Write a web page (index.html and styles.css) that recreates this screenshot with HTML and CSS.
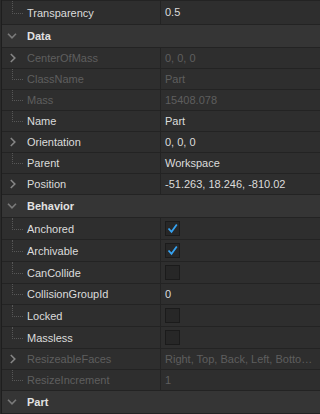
FILE: index.html
```html
<!DOCTYPE html>
<html>
<head>
<meta charset="utf-8">
<link rel="stylesheet" href="styles.css">
</head>
<body>
<div class="panel">
  <div class="list">
    <div class="row top leaf"><div class="name">Transparency</div><div class="val">0.5</div></div>
    <div class="hdr"><svg class="chev-down" viewBox="0 0 10 6" width="10" height="6"><polyline points="1,0.8 5,4.8 9,0.8" fill="none" stroke="#7a7a7a" stroke-width="1.6"/></svg><span class="htext">Data</span></div>
    <div class="row dis"><div class="name"><svg class="chev-right" viewBox="0 0 6 10" width="6" height="10"><polyline points="0.8,1 4.8,5 0.8,9" fill="none" stroke="#858585" stroke-width="1.6"/></svg>CenterOfMass</div><div class="val">0, 0, 0</div></div>
    <div class="row dis leaf"><div class="name">ClassName</div><div class="val">Part</div></div>
    <div class="row dis leaf"><div class="name">Mass</div><div class="val">15408.078</div></div>
    <div class="row leaf"><div class="name">Name</div><div class="val">Part</div></div>
    <div class="row"><div class="name"><svg class="chev-right" viewBox="0 0 6 10" width="6" height="10"><polyline points="0.8,1 4.8,5 0.8,9" fill="none" stroke="#858585" stroke-width="1.6"/></svg>Orientation</div><div class="val">0, 0, 0</div></div>
    <div class="row leaf"><div class="name">Parent</div><div class="val">Workspace</div></div>
    <div class="row"><div class="name"><svg class="chev-right" viewBox="0 0 6 10" width="6" height="10"><polyline points="0.8,1 4.8,5 0.8,9" fill="none" stroke="#858585" stroke-width="1.6"/></svg>Position</div><div class="val">-51.263, 18.246, -810.02</div></div>
    <div class="hdr"><svg class="chev-down" viewBox="0 0 10 6" width="10" height="6"><polyline points="1,0.8 5,4.8 9,0.8" fill="none" stroke="#7a7a7a" stroke-width="1.6"/></svg><span class="htext">Behavior</span></div>
    <div class="row tall leaf"><div class="name">Anchored</div><div class="val"><span class="box"><svg viewBox="0 0 15 15" width="15" height="15"><path d="M3.5 7.5 L6.5 10.8 L11.8 3.5" fill="none" stroke="#36a2f0" stroke-width="1.8"/></svg></span></div></div>
    <div class="row tall leaf"><div class="name">Archivable</div><div class="val"><span class="box"><svg viewBox="0 0 15 15" width="15" height="15"><path d="M3.5 7.5 L6.5 10.8 L11.8 3.5" fill="none" stroke="#36a2f0" stroke-width="1.8"/></svg></span></div></div>
    <div class="row tall leaf"><div class="name">CanCollide</div><div class="val"><span class="box"></span></div></div>
    <div class="row leaf"><div class="name">CollisionGroupId</div><div class="val">0</div></div>
    <div class="row tall leaf"><div class="name">Locked</div><div class="val"><span class="box"></span></div></div>
    <div class="row tall leaf"><div class="name">Massless</div><div class="val"><span class="box"></span></div></div>
    <div class="row dis"><div class="name"><svg class="chev-right" viewBox="0 0 6 10" width="6" height="10"><polyline points="0.8,1 4.8,5 0.8,9" fill="none" stroke="#858585" stroke-width="1.6"/></svg>ResizeableFaces</div><div class="val">Right, Top, Back, Left, Botto…</div></div>
    <div class="row dis leaf"><div class="name">ResizeIncrement</div><div class="val">1</div></div>
    <div class="hdr"><svg class="chev-down" viewBox="0 0 10 6" width="10" height="6"><polyline points="1,0.8 5,4.8 9,0.8" fill="none" stroke="#7a7a7a" stroke-width="1.6"/></svg><span class="htext">Part</span></div>
  </div>
</div>
</body>
</html>
```
FILE: styles.css
```css
html, body {
  margin: 0;
  padding: 0;
  background: #2e2e2e;
  overflow: hidden;
}
body {
  font-family: "Liberation Sans", Arial, sans-serif;
  font-size: 11px;
  color: #dcdcdc;
}
.panel {
  padding-left: 1px;
  background: #2a2a2a;
  height: 414px;
}
.list {
  border-left: 1px solid #1e1e1e;
  background: #2e2e2e;
  height: 414px;
}
.row {
  display: grid;
  grid-template-columns: 159px 1fr;
  height: 20px;
  border-bottom: 1px solid #232323;
}
.row.top {
  height: 23px;
  border-top: 1px solid #232323;
}
.row.tall {
  height: 21px;
}
.name {
  position: relative;
  display: flex;
  align-items: center;
  padding-left: 25px;
  border-right: 1px solid #232323;
  white-space: nowrap;
  overflow: hidden;
}
.leaf .name::before {
  content: "";
  position: absolute;
  left: 10px;
  top: 0;
  width: 10px;
  height: 50%;
  border-left: 1px dotted #575757;
  border-bottom: 1px dotted #575757;
}
.val {
  display: block;
  line-height: 20px;
  padding-left: 4px;
  padding-right: 1px;
  white-space: nowrap;
  overflow: hidden;
  min-width: 0;
}
.row.top .val { line-height: 23px; }
.row.tall .val { line-height: 21px; }
.dis .name, .dis .val {
  color: #5e5e5e;
}
.hdr {
  height: 22px;
  border-bottom: 1px solid #232323;
  background: #353535;
  display: flex;
  align-items: center;
  position: relative;
}
.htext {
  font-weight: bold;
  color: #e2e2e2;
  padding-left: 25px;
}
.chev-down {
  position: absolute;
  left: 5px;
  top: 8px;
}
.chev-right {
  position: absolute;
  left: 8px;
  top: 5px;
}
.box {
  display: inline-block;
  vertical-align: middle;
  width: 13px;
  height: 13px;
  margin-top: -2px;
  background: #272727;
  border: 1px solid #1b1b1b;
  position: relative;
}
.box svg {
  position: absolute;
  left: -1px;
  top: -1px;
}
```
